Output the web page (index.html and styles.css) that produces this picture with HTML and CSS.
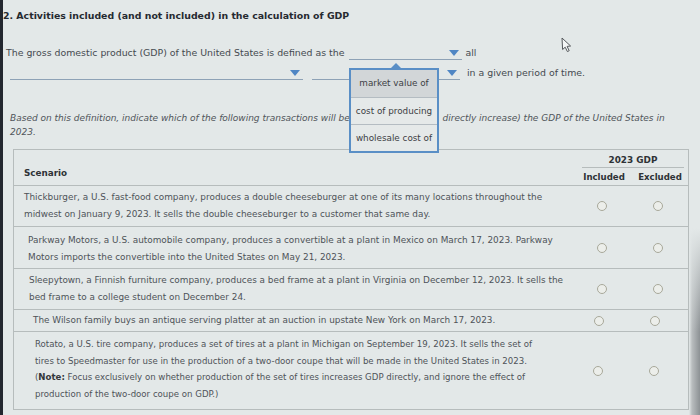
FILE: index.html
```html
<!DOCTYPE html>
<html>
<head>
<meta charset="utf-8">
<link rel="stylesheet" href="styles.css">
</head>
<body>
<div class="page">
  <h2 class="title">2. Activities included (and not included) in the calculation of GDP</h2>

  <div class="def">
    <div class="line line1">
      <span class="txt">The gross domestic product (GDP) of the United States is defined as the</span>
      <span class="dd dd-a"><span class="arrow"></span></span>
      <span class="txt">all</span>
      <svg class="cursor" width="12" height="16" viewBox="0 0 12 16"><path d="M2 1 L2.6 12.5 L5.2 10.2 L7.4 14.6 L9.2 13.7 L7.1 9.4 L10.6 9 Z" fill="#f4f6f6" stroke="#55585c" stroke-width="1" stroke-linejoin="round"/></svg>
    </div>
    <div class="line line2">
      <span class="dd dd-b"><span class="arrow"></span></span>
      <span class="dd dd-c"><span class="arrow"></span></span>
      <span class="txt">in a given period of time.</span>
    </div>
    <div class="menu">
      <span class="notch"></span>
      <div class="opt sel">market value of</div>
      <div class="opt">cost of producing</div>
      <div class="opt">wholesale cost of</div>
    </div>
  </div>

  <p class="instr">Based on this definition, indicate which of the following transactions will be included in (that is, directly increase) the GDP of the United States in<br>2023.</p>

  <table class="grid">
    <thead>
      <tr class="h1">
        <th class="scen" rowspan="2">Scenario</th>
        <th class="gdp" colspan="2"><span>2023 GDP</span></th>
      </tr>
      <tr class="h2">
        <th class="col c1">Included</th>
        <th class="col c2">Excluded</th>
      </tr>
    </thead>
    <tbody>
      <tr class="r1">
        <td class="s">Thickburger, a U.S. fast-food company, produces a double cheeseburger at one of its many locations throughout the<br>midwest on January 9, 2023. It sells the double cheeseburger to a customer that same day.</td>
        <td class="r"><span class="radio"></span></td>
        <td class="r"><span class="radio"></span></td>
      </tr>
      <tr class="r2">
        <td class="s">Parkway Motors, a U.S. automobile company, produces a convertible at a plant in Mexico on March 17, 2023. Parkway<br>Motors imports the convertible into the United States on May 21, 2023.</td>
        <td class="r"><span class="radio"></span></td>
        <td class="r"><span class="radio"></span></td>
      </tr>
      <tr class="r3">
        <td class="s">Sleepytown, a Finnish furniture company, produces a bed frame at a plant in Virginia on December 12, 2023. It sells the<br>bed frame to a college student on December 24.</td>
        <td class="r"><span class="radio"></span></td>
        <td class="r"><span class="radio"></span></td>
      </tr>
      <tr class="r4">
        <td class="s">The Wilson family buys an antique serving platter at an auction in upstate New York on March 17, 2023.</td>
        <td class="r"><span class="radio"></span></td>
        <td class="r"><span class="radio"></span></td>
      </tr>
      <tr class="r5">
        <td class="s">Rotato, a U.S. tire company, produces a set of tires at a plant in Michigan on September 19, 2023. It sells the set of<br>tires to Speedmaster for use in the production of a two-door coupe that will be made in the United States in 2023.<br>(<b>Note:</b> Focus exclusively on whether production of the set of tires increases GDP directly, and ignore the effect of<br>production of the two-door coupe on GDP.)</td>
        <td class="r"><span class="radio"></span></td>
        <td class="r"><span class="radio"></span></td>
      </tr>
    </tbody>
  </table>
</div>
</body>
</html>
```

FILE: styles.css
```css
html, body {
  margin: 0;
  padding: 0;
}
body {
  width: 700px;
  height: 415px;
  overflow: hidden;
  background-color: #e3e8e8;
  background-image:
    linear-gradient(to bottom, #e3e8e8 0, #e3e8e8 55%, rgba(227, 232, 232, 0) 80%),
    linear-gradient(to right, #e3e8e8 0, #e3e8e8 689px, #b9bdbf 692px, #8c9194 700px);
  font-family: "DejaVu Sans", Verdana, sans-serif;
  color: #3c4044;
}
.page {
  height: 415px;
  border-left: 3px solid #23272f;
  box-sizing: border-box;
  padding: 9px 0 0 0;
}
.title {
  margin: 0;
  font-size: 9.4px;
  font-weight: bold;
  color: #262a30;
  line-height: 14px;
  white-space: nowrap;
}
.def {
  position: relative;
  margin-top: 20px;
  padding-left: 3px;
}
.line {
  display: flex;
  align-items: flex-end;
  font-size: 9.4px;
  color: #454a50;
  white-space: nowrap;
}
.line1 {
  height: 16px;
}
.line2 {
  height: 20px;
  padding-left: 4px;
}
.txt {
  line-height: 12px;
}
.dd {
  position: relative;
  display: inline-block;
  height: 12px;
  border-bottom: 1.5px solid #8ea2b6;
  margin-bottom: -1px;
}
.dd-a {
  width: 113px;
  margin-left: 5px;
  margin-right: 3px;
}
.dd-b {
  width: 293px;
  margin-right: 9px;
}
.dd-c {
  width: 148px;
  margin-right: 7px;
}
.arrow {
  position: absolute;
  right: 3px;
  bottom: 3px;
  width: 0;
  height: 0;
  border-left: 5px solid transparent;
  border-right: 5px solid transparent;
  border-top: 6px solid #4f86c4;
}
.line1 .cursor {
  margin-left: 84px;
  margin-bottom: 6px;
}
.menu {
  position: absolute;
  left: 346px;
  top: 25px;
  width: 86px;
  border: 2px solid #5a8fc6;
  background: #e5e9e9;
  font-size: 8.8px;
  color: #3c4044;
}
.notch {
  position: absolute;
  left: 40px;
  top: -7px;
  width: 0;
  height: 0;
  border-left: 5px solid transparent;
  border-right: 5px solid transparent;
  border-bottom: 5px solid #5a8fc6;
}
.opt {
  height: 26px;
  line-height: 26px;
  text-align: center;
  white-space: nowrap;
  border-top: 1px solid #b4bcc2;
}
.opt:first-of-type {
  border-top: none;
  height: 27px;
  line-height: 27px;
}
.opt.sel {
  background: #d2d6d8;
}
.instr {
  margin: 32px 0 0 7px;
  font-size: 9px;
  font-style: italic;
  line-height: 14px;
  color: #50555a;
  white-space: nowrap;
}
.grid {
  margin: 10px 0 0 10px;
  width: 676px;
  border-collapse: collapse;
  border: 1px solid #b6bcbc;
  font-size: 8.9px;
}
.grid th {
  font-weight: bold;
  color: #2e3236;
  padding: 0;
}
.h1 th {
  height: 14px;
}
.h1 .scen {
  text-align: left;
  padding: 10px 0 0 10px;
  vertical-align: middle;
  border-bottom: 1px solid #b6bcbc;
  font-size: 8.8px;
}
.gdp {
  text-align: center;
  padding-top: 4px !important;
  vertical-align: bottom;
}
.gdp span {
  display: block;
  margin: 0 4px 0 6px;
  border-bottom: 1px solid #b6bcbc;
  line-height: 11px;
  padding-bottom: 1px;
}
.h2 th {
  height: 17px;
  border-bottom: 1px solid #b6bcbc;
  font-size: 8.6px;
  vertical-align: middle;
}
.c1 {
  width: 56px;
}
.c2 {
  width: 56px;
}
.grid td {
  border-top: 1px solid #b6bcbc;
}
.s {
  padding: 3px 8px 3px 10px;
  line-height: 17px;
  color: #4e5358;
  white-space: nowrap;
}
.r2 .s {
  padding-left: 14px;
  padding-top: 5px;
  padding-bottom: 2px;
}
.r3 .s { padding-left: 15px; }
.r4 .s {
  padding-left: 19px;
  line-height: 15px;
}
.r5 .s {
  padding-left: 21px;
  font-size: 8.6px;
  padding-top: 4px;
  padding-bottom: 7px;
  line-height: 16.5px;
}
.s b {
  color: #33373b;
}
.r {
  text-align: center;
  vertical-align: middle;
  padding-right: 6px;
}
.r5 .r { padding-right: 14px; }
.r4 .r { padding-right: 11px; }
.radio {
  display: inline-block;
  width: 8px;
  height: 8px;
  border: 1px solid #a8a89a;
  border-radius: 50%;
  background: #eceeea;
  vertical-align: middle;
}
```
